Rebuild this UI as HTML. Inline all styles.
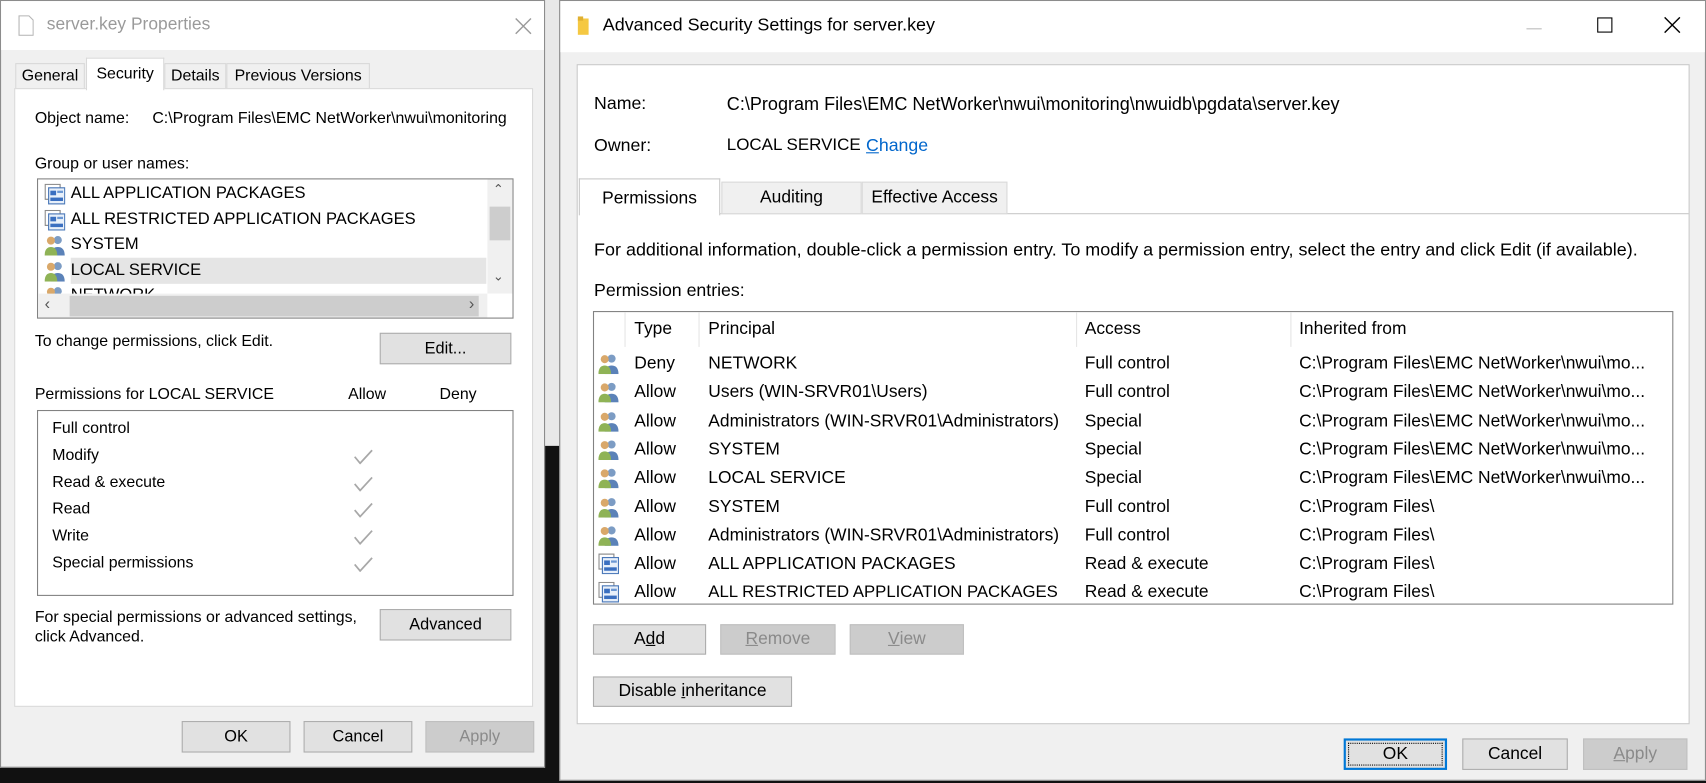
<!DOCTYPE html>
<html><head><meta charset="utf-8"><style>
*{margin:0;padding:0;box-sizing:border-box}
body{width:1706px;height:783px;overflow:hidden;background:#111;font-family:"Liberation Sans",sans-serif;color:#000}
#s{position:absolute;left:0;top:0;width:1568px;height:720px;transform:scale(1.088,1.0875);transform-origin:0 0;background:#111}
.a{position:absolute;white-space:nowrap}
.t{font-size:14.6px}
.r{font-size:16.3px}
.btn{position:absolute;background:#e1e1e1;border:1px solid #adadad;text-align:center;font-size:15px;display:flex;align-items:center;justify-content:center;white-space:pre}
.dis{background:#cccccc;border-color:#bfbfbf;color:#8a8a8a}
.tab{position:absolute;background:#f0f0f0;border:1px solid #d9d9d9;font-size:14.6px;display:flex;align-items:center;justify-content:center}
.chk{position:absolute;left:324px;width:18px;height:14px}
.row{position:absolute;left:0;width:990px;height:26px;font-size:16px}
.row span{position:absolute;top:4px;white-space:nowrap}
</style></head><body><div id="s">
<div class="a" style="left:500px;top:0;width:14px;height:410px;background:#e8e8e8"></div>

<!-- LEFT DIALOG -->
<div class="a" style="left:0;top:0;width:501px;height:706px;background:#f0f0f0;border:1px solid #8c8c8c">
 <div class="a" style="left:0;top:0;width:499px;height:45px;background:#fff"></div>
 <svg class="a" style="left:16px;top:13px" width="14" height="19" viewBox="0 0 14 19"><path d="M.5 .5h9l4 4v14H.5z" fill="#fff" stroke="#b5b5b5"/></svg>
 <div class="a" style="left:42px;top:13px;font-size:16px;color:#9a9a9a">server.key Properties</div>
 <svg class="a" style="left:472px;top:15px" width="16" height="16"><path d="M1 1L15 15M15 1L1 15" stroke="#9a9a9a" stroke-width="1.3"/></svg>
 <div class="tab" style="left:13px;top:57px;width:64px;height:24px">General</div>
 <div class="tab" style="left:150px;top:57px;width:57px;height:24px">Details</div>
 <div class="tab" style="left:207px;top:57px;width:132px;height:24px">Previous Versions</div>
 <div class="a" style="left:12px;top:80px;width:477px;height:569px;background:#fff;border:1px solid #d9d9d9"></div>
 <div class="tab" style="left:78px;top:52px;width:72px;height:30px;background:#fff;border-bottom:none;align-items:flex-start;padding-top:6px">Security</div>
 <div class="a t" style="left:31px;top:100px">Object name:</div>
 <div class="a t" style="left:139px;top:100px;width:333px;overflow:hidden">C:\Program Files\EMC NetWorker\nwui\monitoring</div>
 <div class="a t" style="left:31px;top:142px">Group or user names:</div>
 <div class="a" style="left:33px;top:163px;width:438px;height:129px;background:#fff;border:1px solid #828282;overflow:hidden">
  <div class="a" style="left:30px;top:72px;width:382px;height:24px;background:#e5e5e5"></div>
  <div id="lst"></div>
  <div class="a" style="left:413px;top:0;width:23px;height:105px;background:#f0f0f0"></div>
  <div class="a" style="left:415px;top:25px;width:19px;height:31px;background:#cdcdcd"></div>
  <div class="a" style="left:418px;top:2px;font-size:12px;color:#555">&#8963;</div>
  <div class="a" style="left:418px;top:82px;font-size:12px;color:#555">&#8964;</div>
  <div class="a" style="left:0;top:105px;width:413px;height:22px;background:#f0f0f0"></div>
  <div class="a" style="left:413px;top:105px;width:23px;height:22px;background:#fff"></div>
  <div class="a" style="left:29px;top:107px;width:376px;height:19px;background:#cdcdcd"></div>
  <div class="a" style="left:6px;top:106px;font-size:15px;color:#555">&#8249;</div>
  <div class="a" style="left:396px;top:106px;font-size:15px;color:#555">&#8250;</div>
 </div>
 <div class="a t" style="left:31px;top:305px">To change permissions, click Edit.</div>
 <div class="btn" style="left:348px;top:305px;width:121px;height:29px">Edit...</div>
 <div class="a t" style="left:31px;top:354px">Permissions for LOCAL SERVICE</div>
 <div class="a t" style="left:319px;top:354px">Allow</div>
 <div class="a t" style="left:403px;top:354px">Deny</div>
 <div class="a" style="left:33px;top:376px;width:438px;height:171px;background:#fff;border:1px solid #828282"></div>
 <div id="perm"></div>
 <div class="a t" style="left:31px;top:559px">For special permissions or advanced settings,</div>
 <div class="a t" style="left:31px;top:577px">click Advanced.</div>
 <div class="btn" style="left:348px;top:559px;width:121px;height:29px">Advanced</div>
 <div class="btn" style="left:166px;top:662px;width:100px;height:29px">OK</div>
 <div class="btn" style="left:278px;top:662px;width:100px;height:29px">Cancel</div>
 <div class="btn dis" style="left:390px;top:662px;width:100px;height:29px">Apply</div>
</div>

<!-- RIGHT DIALOG -->
<div class="a" style="left:514px;top:0;width:1054px;height:718px;background:#f0f0f0;border:1px solid #8c8c8c">
 <div class="a" style="left:0;top:0;width:1052px;height:47px;background:#fff"></div>
 <svg class="a" style="left:16px;top:14px" width="11" height="18"><rect x="0" y="2" width="10" height="15" fill="#f5c842"/><rect x="0" y="0" width="5" height="4" fill="#e0b030"/></svg>
 <div class="a" style="left:39px;top:13px;font-size:16.5px">Advanced Security Settings for server.key</div>
 <div class="a" style="left:888px;top:25px;width:14px;height:1px;background:#bbb"></div>
 <div class="a" style="left:953px;top:15px;width:14px;height:14px;border:1.3px solid #000"></div>
 <svg class="a" style="left:1014px;top:14px" width="16" height="16"><path d="M1 1L15 15M15 1L1 15" stroke="#000" stroke-width="1.3"/></svg>
 <div class="a" style="left:15px;top:58px;width:1023px;height:607px;background:#fff;border:1px solid #c8c8c8"></div>
 <div class="a r" style="left:31px;top:85px">Name:</div>
 <div class="a r" style="left:153px;top:85px;font-size:16.6px">C:\Program Files\EMC NetWorker\nwui\monitoring\nwuidb\pgdata\server.key</div>
 <div class="a r" style="left:31px;top:124px">Owner:</div>
 <div class="a r" style="left:153px;top:124px;font-size:15.6px">LOCAL SERVICE</div>
 <div class="a r" style="left:281px;top:124px;color:#0066cc"><u>C</u>hange</div>
 <div class="a" style="left:146px;top:195px;width:891px;height:1px;background:#c8c8c8"></div>
 <div class="tab" style="left:148px;top:166px;width:129px;height:30px;font-size:16px">Auditing</div>
 <div class="tab" style="left:277px;top:166px;width:134px;height:30px;font-size:16px">Effective Access</div>
 <div class="a" style="left:17px;top:163px;width:130px;height:34px;background:#fff;border:1px solid #c8c8c8;border-bottom:none;font-size:16px;text-align:center;padding-top:9px">Permissions</div>
 <div class="a r" style="left:31px;top:220px;font-size:16.5px">For additional information, double-click a permission entry. To modify a permission entry, select the entry and click Edit (if available).</div>
 <div class="a r" style="left:31px;top:257px">Permission entries:</div>
 <div class="a" style="left:30px;top:285px;width:993px;height:270px;background:#fff;border:1px solid #828282;overflow:hidden">
  <div class="a" style="left:28px;top:0;width:1px;height:32px;background:#e5e5e5"></div>
  <div class="a" style="left:96px;top:0;width:1px;height:32px;background:#e5e5e5"></div>
  <div class="a" style="left:443px;top:0;width:1px;height:32px;background:#e5e5e5"></div>
  <div class="a" style="left:640px;top:0;width:1px;height:32px;background:#e5e5e5"></div>
  <div class="a" style="left:37px;top:7px;font-size:16px">Type</div>
  <div class="a" style="left:105px;top:7px;font-size:16px">Principal</div>
  <div class="a" style="left:451px;top:7px;font-size:16px">Access</div>
  <div class="a" style="left:648px;top:7px;font-size:16px">Inherited from</div>
  <div id="rows"></div>
 </div>
 <div class="btn" style="left:30px;top:573px;width:104px;height:28px;font-size:16px">A<u>d</u>d</div>
 <div class="btn dis" style="left:147px;top:573px;width:106px;height:28px;font-size:16px"><u>R</u>emove</div>
 <div class="btn dis" style="left:266px;top:573px;width:105px;height:28px;font-size:16px"><u>V</u>iew</div>
 <div class="btn" style="left:30px;top:621px;width:183px;height:28px;font-size:16px">Disable&nbsp;<u>i</u>nheritance</div>
 <div class="btn" style="left:720px;top:678px;width:95px;height:29px;font-size:16px;border:2px solid #0078d7;outline:1px dotted #000;outline-offset:-5px">OK</div>
 <div class="btn" style="left:829px;top:678px;width:97px;height:29px;font-size:16px">Cancel</div>
 <div class="btn dis" style="left:940px;top:678px;width:96px;height:29px;font-size:16px"><u>A</u>pply</div>
</div>
</div>
<script>
var U='<svg width="19" height="19" viewBox="0 0 18 18"><circle cx="11.5" cy="4.5" r="3.5" fill="#7c9cc4"/><path d="M5.5 18c0-5.5 2.5-7.5 6-7.5s6 2 6 7.5z" fill="#5b82b8"/><circle cx="5.5" cy="5" r="3.5" fill="#d9a86a"/><path d="M0 18c0-5.5 2.5-7.5 5.5-7.5s5.5 2 5.5 7.5z" fill="#8fb356"/></svg>';
var P='<svg width="19" height="19" viewBox="0 0 18 18"><rect x="0.5" y="0.5" width="13" height="13" fill="#fff" stroke="#8a8a8a"/><rect x="3.5" y="3.5" width="14" height="14" fill="#e8f0fa" stroke="#4a78b8"/><rect x="5" y="6" width="5" height="4" fill="#3a6fc0"/><rect x="11" y="6" width="5" height="2" fill="#6b97d3"/><rect x="5" y="12" width="11" height="3" fill="#3a6fc0"/></svg>';
var L=[[P,'ALL APPLICATION PACKAGES'],[P,'ALL RESTRICTED APPLICATION PACKAGES'],[U,'SYSTEM'],[U,'LOCAL SERVICE'],[U,'NETWORK']];
var h='';L.forEach(function(x,i){h+='<div class="a" style="left:6px;top:'+(4+i*23.5)+'px">'+x[0]+'</div><div class="a" style="left:30px;top:'+(4+i*23.5)+'px;font-size:15.2px">'+x[1]+'</div>';});
document.getElementById('lst').innerHTML=h;
var Pm=['Full control','Modify','Read & execute','Read','Write','Special permissions'];h='';
Pm.forEach(function(x,i){var y=385+i*24.8;h+='<div class="a t" style="left:47px;top:'+y+'px">'+x.replace('&','&amp;')+'</div>';
 if(i>0)h+='<svg class="chk" style="top:'+(y+2)+'px" viewBox="0 0 18 14"><path d="M1 7l5 6L17 1" fill="none" stroke="#a8a8a8" stroke-width="1.6"/></svg>';});
document.getElementById('perm').innerHTML=h;
var E='C:\\Program Files\\EMC NetWorker\\nwui\\mo...',F='C:\\Program Files\\';
var R=[[U,'Deny','NETWORK','Full control',E],[U,'Allow','Users (WIN-SRVR01\\Users)','Full control',E],[U,'Allow','Administrators (WIN-SRVR01\\Administrators)','Special',E],[U,'Allow','SYSTEM','Special',E],[U,'Allow','LOCAL SERVICE','Special',E],[U,'Allow','SYSTEM','Full control',F],[U,'Allow','Administrators (WIN-SRVR01\\Administrators)','Full control',F],[P,'Allow','ALL APPLICATION PACKAGES','Read &amp; execute',F],[P,'Allow','<span style="position:static;font-size:15.4px">ALL RESTRICTED APPLICATION PACKAGES</span>','Read &amp; execute',F]];
h='';R.forEach(function(r,i){var y=35+i*26.3;h+='<div class="row" style="top:'+y+'px"><span style="left:4px;top:3px">'+r[0]+'</span><span style="left:37px">'+r[1]+'</span><span style="left:105px">'+r[2]+'</span><span style="left:451px">'+r[3]+'</span><span style="left:648px">'+r[4]+'</span></div>';});
document.getElementById('rows').innerHTML=h;
</script>
</body></html>
